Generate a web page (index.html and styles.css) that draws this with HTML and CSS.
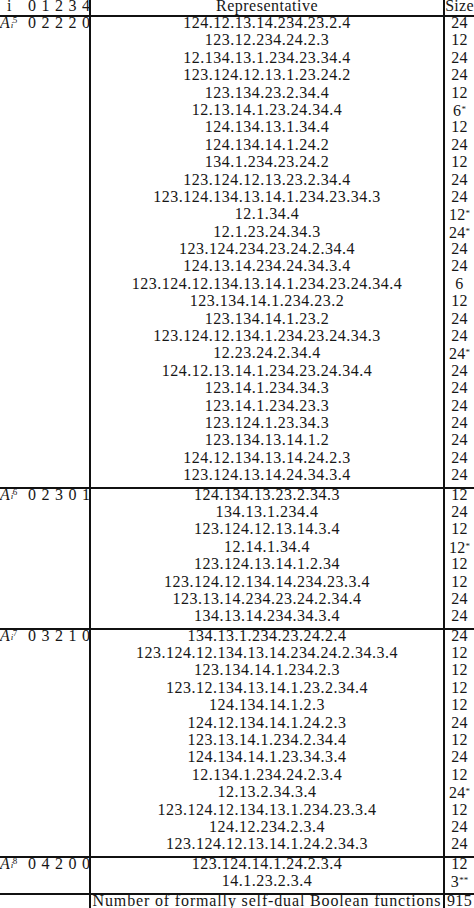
FILE: index.html
```html
<!DOCTYPE html>
<html>
<head>
<meta charset="utf-8">
<link rel="stylesheet" href="styles.css">
</head>
<body>
<div class="table">
  <div class="grp head">
    <div class="c1"><span class="lab lab-i">i</span><span class="d">0</span><span class="d">1</span><span class="d">2</span><span class="d">3</span><span class="d">4</span></div>
    <div class="rows">
      <div class="row hrow"><span class="rep">Representative</span><span class="size">Size</span></div>
    </div>
  </div>

  <div class="grp">
    <div class="c1"><span class="lab"><span class="A">A</span><span class="scr"><span class="sp">5</span><span class="sb">i</span></span></span><span class="d">0</span><span class="d">2</span><span class="d">2</span><span class="d">2</span><span class="d">0</span></div>
    <div class="rows">
      <div class="row"><span class="rep">124.12.13.14.234.23.2.4</span><span class="size">24</span></div>
      <div class="row"><span class="rep">123.12.234.24.2.3</span><span class="size">12</span></div>
      <div class="row"><span class="rep">12.134.13.1.234.23.34.4</span><span class="size">24</span></div>
      <div class="row"><span class="rep">123.124.12.13.1.23.24.2</span><span class="size">24</span></div>
      <div class="row"><span class="rep">123.134.23.2.34.4</span><span class="size">12</span></div>
      <div class="row"><span class="rep">12.13.14.1.23.24.34.4</span><span class="size">6<span class="star">*</span></span></div>
      <div class="row"><span class="rep">124.134.13.1.34.4</span><span class="size">12</span></div>
      <div class="row"><span class="rep">124.134.14.1.24.2</span><span class="size">24</span></div>
      <div class="row"><span class="rep">134.1.234.23.24.2</span><span class="size">12</span></div>
      <div class="row"><span class="rep">123.124.12.13.23.2.34.4</span><span class="size">24</span></div>
      <div class="row"><span class="rep">123.124.134.13.14.1.234.23.34.3</span><span class="size">24</span></div>
      <div class="row"><span class="rep">12.1.34.4</span><span class="size">12<span class="star">*</span></span></div>
      <div class="row"><span class="rep">12.1.23.24.34.3</span><span class="size">24<span class="star">*</span></span></div>
      <div class="row"><span class="rep">123.124.234.23.24.2.34.4</span><span class="size">24</span></div>
      <div class="row"><span class="rep">124.13.14.234.24.34.3.4</span><span class="size">24</span></div>
      <div class="row"><span class="rep">123.124.12.134.13.14.1.234.23.24.34.4</span><span class="size">6</span></div>
      <div class="row"><span class="rep">123.134.14.1.234.23.2</span><span class="size">12</span></div>
      <div class="row"><span class="rep">123.134.14.1.23.2</span><span class="size">24</span></div>
      <div class="row"><span class="rep">123.124.12.134.1.234.23.24.34.3</span><span class="size">24</span></div>
      <div class="row"><span class="rep">12.23.24.2.34.4</span><span class="size">24<span class="star">*</span></span></div>
      <div class="row"><span class="rep">124.12.13.14.1.234.23.24.34.4</span><span class="size">24</span></div>
      <div class="row"><span class="rep">123.14.1.234.34.3</span><span class="size">24</span></div>
      <div class="row"><span class="rep">123.14.1.234.23.3</span><span class="size">24</span></div>
      <div class="row"><span class="rep">123.124.1.23.34.3</span><span class="size">24</span></div>
      <div class="row"><span class="rep">123.134.13.14.1.2</span><span class="size">24</span></div>
      <div class="row"><span class="rep">124.12.134.13.14.24.2.3</span><span class="size">24</span></div>
      <div class="row"><span class="rep">123.124.13.14.24.34.3.4</span><span class="size">24</span></div>
    </div>
  </div>

  <div class="grp">
    <div class="c1"><span class="lab"><span class="A">A</span><span class="scr"><span class="sp">6</span><span class="sb">i</span></span></span><span class="d">0</span><span class="d">2</span><span class="d">3</span><span class="d">0</span><span class="d">1</span></div>
    <div class="rows">
      <div class="row"><span class="rep">124.134.13.23.2.34.3</span><span class="size">12</span></div>
      <div class="row"><span class="rep">134.13.1.234.4</span><span class="size">24</span></div>
      <div class="row"><span class="rep">123.124.12.13.14.3.4</span><span class="size">12</span></div>
      <div class="row"><span class="rep">12.14.1.34.4</span><span class="size">12<span class="star">*</span></span></div>
      <div class="row"><span class="rep">123.124.13.14.1.2.34</span><span class="size">12</span></div>
      <div class="row"><span class="rep">123.124.12.134.14.234.23.3.4</span><span class="size">12</span></div>
      <div class="row"><span class="rep">123.13.14.234.23.24.2.34.4</span><span class="size">24</span></div>
      <div class="row"><span class="rep">134.13.14.234.34.3.4</span><span class="size">24</span></div>
    </div>
  </div>

  <div class="grp">
    <div class="c1"><span class="lab"><span class="A">A</span><span class="scr"><span class="sp">7</span><span class="sb">i</span></span></span><span class="d">0</span><span class="d">3</span><span class="d">2</span><span class="d">1</span><span class="d">0</span></div>
    <div class="rows">
      <div class="row"><span class="rep">134.13.1.234.23.24.2.4</span><span class="size">24</span></div>
      <div class="row"><span class="rep">123.124.12.134.13.14.234.24.2.34.3.4</span><span class="size">12</span></div>
      <div class="row"><span class="rep">123.134.14.1.234.2.3</span><span class="size">12</span></div>
      <div class="row"><span class="rep">123.12.134.13.14.1.23.2.34.4</span><span class="size">12</span></div>
      <div class="row"><span class="rep">124.134.14.1.2.3</span><span class="size">12</span></div>
      <div class="row"><span class="rep">124.12.134.14.1.24.2.3</span><span class="size">24</span></div>
      <div class="row"><span class="rep">123.13.14.1.234.2.34.4</span><span class="size">12</span></div>
      <div class="row"><span class="rep">124.134.14.1.23.34.3.4</span><span class="size">24</span></div>
      <div class="row"><span class="rep">12.134.1.234.24.2.3.4</span><span class="size">12</span></div>
      <div class="row"><span class="rep">12.13.2.34.3.4</span><span class="size">24<span class="star">*</span></span></div>
      <div class="row"><span class="rep">123.124.12.134.13.1.234.23.3.4</span><span class="size">12</span></div>
      <div class="row"><span class="rep">124.12.234.2.3.4</span><span class="size">24</span></div>
      <div class="row"><span class="rep">123.124.12.13.14.1.24.2.34.3</span><span class="size">24</span></div>
    </div>
  </div>

  <div class="grp">
    <div class="c1"><span class="lab"><span class="A">A</span><span class="scr"><span class="sp">8</span><span class="sb">i</span></span></span><span class="d">0</span><span class="d">4</span><span class="d">2</span><span class="d">0</span><span class="d">0</span></div>
    <div class="rows">
      <div class="row"><span class="rep">123.124.14.1.24.2.3.4</span><span class="size">12</span></div>
      <div class="row"><span class="rep">14.1.23.2.3.4</span><span class="size">3<span class="star">**</span></span></div>
    </div>
  </div>

  <div class="grp">
    <div class="c1"></div>
    <div class="rows">
      <div class="row"><span class="rep total">Number of formally self-dual Boolean functions</span><span class="size">915</span></div>
    </div>
  </div>
</div>
</body>
</html>
```
FILE: styles.css
```css
html, body {
  margin: 0;
  padding: 0;
  background: #fff;
}
body {
  width: 474px;
  height: 908px;
  overflow: hidden;
  font-family: "Liberation Serif", "DejaVu Serif", serif;
  font-size: 16px;
  letter-spacing: 0.5px;
  color: #161616;
}
.table {
  width: 474px;
}
.grp {
  display: flex;
  border-top: 2px solid #111;
}
.grp.head {
  border-top: none;
}
.c1 {
  width: 89px;
  flex: none;
  border-right: 2px solid #111;
  display: flex;
  align-items: flex-start;
  line-height: 11px;
  letter-spacing: 0;
}
.rows {
  flex: 1;
  display: flex;
  flex-direction: column;
}
.row {
  display: flex;
  height: 17.4px;
  line-height: 11px;
}
.row.hrow {
  height: 15px;
}
.head .c1,
.head .row {
  line-height: 12px;
}
.rep {
  flex: 1;
  text-align: center;
  white-space: nowrap;
}
.rep.total {
  letter-spacing: 0.85px;
}
.size {
  width: 29px;
  flex: none;
  border-left: 2px solid #111;
  text-align: center;
  white-space: nowrap;
  letter-spacing: 0.3px;
}
.star {
  font-size: 9px;
  vertical-align: 4px;
  letter-spacing: 0;
}
.lab {
  width: 28px;
  flex: none;
  display: flex;
  align-items: flex-start;
}
.lab-i {
  padding-left: 7px;
  box-sizing: border-box;
}
.A {
  font-style: italic;
}
.scr {
  display: flex;
  flex-direction: column;
  font-size: 9px;
  line-height: 4.5px;
  margin-top: 1px;
  margin-left: 1px;
}
.sp {
  padding-left: 2px;
}
.sb {
  font-style: italic;
}
.d {
  width: 8px;
  margin-right: 5.5px;
  text-align: center;
  flex: none;
}
```
